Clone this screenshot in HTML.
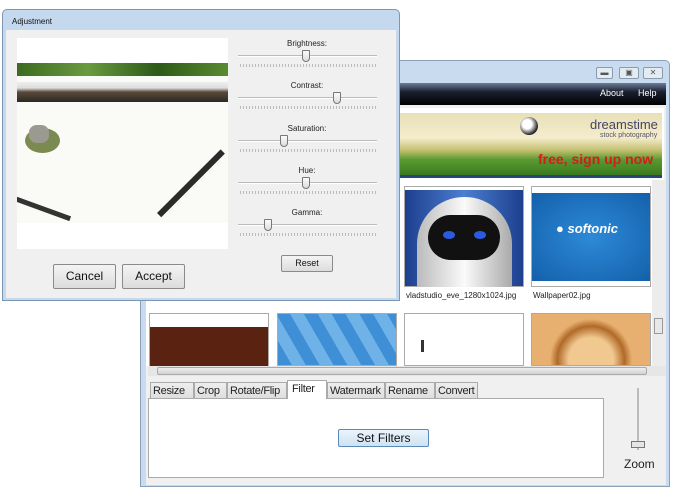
<!DOCTYPE html>
<html><head><style>
*{margin:0;padding:0;box-sizing:border-box}
body{width:680px;height:501px;background:#fff;position:relative;overflow:hidden;font-family:"Liberation Sans",sans-serif}
.a{position:absolute}
.btn{position:absolute;border:1px solid #8a8a8a;border-radius:2px;background:linear-gradient(#f4f4f4,#dcdcdc);text-align:center;color:#111}
.tab{position:absolute;top:382px;height:17px;border:1px solid #aaa;border-bottom:none;background:linear-gradient(#eee,#ddd);font-size:11px;letter-spacing:-0.3px;padding-left:2px;line-height:16px;color:#222;white-space:nowrap;overflow:hidden}
.lbl{position:absolute;font-size:8px;color:#222;width:140px;text-align:center}
.line{position:absolute;height:2px;background:#bbb;border-bottom:1px solid #fff}
.ticks{position:absolute;height:3px;background:repeating-linear-gradient(90deg,#bbb 0 1px,transparent 1px 3px)}
.thumb{position:absolute;width:8px;height:12px;border:1px solid #777;background:linear-gradient(#fafafa,#ddd);border-radius:1px 1px 4px 4px}
</style></head><body>
<div class="a" style="left:140px;top:60px;width:530px;height:427px;background:#c9dcef;border:1px solid #8aa0b8;border-radius:5px 5px 0 0"></div>
<div class="a" style="left:596px;top:67px;width:17px;height:12px;border:1px solid #8a9bb0;background:#e3ebf3;border-radius:2px;font-size:8px;text-align:center;color:#555">▬</div>
<div class="a" style="left:619px;top:67px;width:20px;height:12px;border:1px solid #8a9bb0;background:#e3ebf3;border-radius:2px;font-size:8px;text-align:center;color:#555">▣</div>
<div class="a" style="left:643px;top:67px;width:20px;height:12px;border:1px solid #8a9bb0;background:#e3ebf3;border-radius:2px;font-size:8px;text-align:center;color:#555">✕</div>
<div class="a" style="left:146px;top:83px;width:520px;height:22px;background:linear-gradient(#6d7d98,#1a2030 40%,#000)"></div>
<div class="a" style="left:600px;top:88px;font-size:9px;color:#fff">About</div>
<div class="a" style="left:638px;top:88px;font-size:9px;color:#fff">Help</div>
<div class="a" style="left:146px;top:105px;width:520px;height:380px;background:#f0f0f0"></div>
<div class="a" style="left:146px;top:108px;width:518px;height:72px;background:#fff"></div>
<div class="a" style="left:399px;top:113px;width:263px;height:62px;background:linear-gradient(#e8e0b8,#f4eccc 40%,#c4c070 60%,#5a9a30 75%,#3a7a20)"></div>
<div class="a" style="left:520px;top:117px;width:18px;height:18px;border-radius:50%;background:radial-gradient(circle at 40% 40%,#fff 30%,#222 70%)"></div>
<div class="a" style="left:590px;top:117px;font-size:13px;color:#446">dreamstime</div>
<div class="a" style="left:600px;top:132px;font-size:7px;color:#556">stock photography</div>
<div class="a" style="left:538px;top:151px;font-size:14px;font-weight:bold;color:#d41c1c">free, sign up now</div>
<div class="a" style="left:399px;top:175px;width:263px;height:3px;background:#26457a"></div>
<div class="a" style="left:146px;top:180px;width:506px;height:186px;background:#fff"></div>
<div class="a" style="left:652px;top:180px;width:14px;height:186px;background:#ececec"></div>
<div class="a" style="left:654px;top:318px;width:9px;height:16px;border:1px solid #999;background:#e8e8e8"></div>
<div class="a" style="left:404px;top:186px;width:120px;height:101px;border:1px solid #aaa;background:#fff"></div>
<div class="a" style="left:405px;top:190px;width:118px;height:96px;background:linear-gradient(90deg,#1d3f8e,#4c7ed0,#1d3f8e)"></div>
<div class="a" style="left:417px;top:197px;width:95px;height:90px;border-radius:47px 47px 0 0;background:linear-gradient(90deg,#bbb,#fafafa,#aaa)"></div>
<div class="a" style="left:428px;top:215px;width:72px;height:45px;border-radius:36px;background:#111"></div>
<div class="a" style="left:443px;top:231px;width:12px;height:8px;border-radius:50%;background:#2a5ae0"></div>
<div class="a" style="left:474px;top:231px;width:12px;height:8px;border-radius:50%;background:#2a5ae0"></div>
<div class="a" style="left:531px;top:186px;width:120px;height:101px;border:1px solid #aaa;background:#fff"></div>
<div class="a" style="left:532px;top:193px;width:118px;height:88px;background:radial-gradient(#2d8ad8,#1460aa)"></div>
<div class="a" style="left:556px;top:221px;font-size:13px;font-weight:bold;font-style:italic;color:#fff">● softonic</div>
<div class="a" style="left:406px;top:291px;font-size:8px;color:#222">vladstudio_eve_1280x1024.jpg</div>
<div class="a" style="left:533px;top:291px;font-size:8px;color:#222">Wallpaper02.jpg</div>
<div class="a" style="left:149px;top:313px;width:120px;height:53px;border:1px solid #aaa;background:#fff"></div>
<div class="a" style="left:150px;top:327px;width:118px;height:39px;background:#5a2210"></div>
<div class="a" style="left:277px;top:313px;width:120px;height:53px;border:1px solid #aaa;background:repeating-linear-gradient(60deg,#3e8fd6 0 12px,#6fb2e8 12px 24px)"></div>
<div class="a" style="left:404px;top:313px;width:120px;height:53px;border:1px solid #aaa;background:#fff"></div>
<div class="a" style="left:421px;top:340px;width:3px;height:12px;background:#333"></div>
<div class="a" style="left:531px;top:313px;width:120px;height:53px;border:1px solid #aaa;background:radial-gradient(circle at 50% 90%,#f0c890 30%,#b06a28 45%,#e8b070 55%)"></div>
<div class="a" style="left:148px;top:366px;width:518px;height:10px;background:#e6e6e6"></div>
<div class="a" style="left:157px;top:367px;width:490px;height:8px;background:linear-gradient(#eee,#d2d2d2);border:1px solid #aaa;border-radius:2px"></div>
<div class="tab" style="left:150px;width:44px">Resize</div>
<div class="tab" style="left:194px;width:33px">Crop</div>
<div class="tab" style="left:227px;width:60px">Rotate/Flip</div>
<div class="tab" style="left:287px;width:40px;top:380px;height:19px;background:#fff;z-index:2;padding-left:4px">Filter</div>
<div class="tab" style="left:327px;width:58px">Watermark</div>
<div class="tab" style="left:385px;width:50px">Rename</div>
<div class="tab" style="left:435px;width:43px">Convert</div>
<div class="a" style="left:148px;top:398px;width:456px;height:80px;background:#fff;border:1px solid #aaa"></div>
<div class="btn" style="left:338px;top:429px;width:91px;height:18px;font-size:12px;line-height:16px;border-color:#5a8ab8;background:linear-gradient(#eaf4fc,#cfe2f2)">Set Filters</div>
<div class="a" style="left:637px;top:388px;width:2px;height:62px;background:#bbb"></div>
<div class="a" style="left:631px;top:441px;width:14px;height:7px;border:1px solid #777;background:#e4e4e4"></div>
<div class="a" style="left:624px;top:457px;font-size:12px;color:#222">Zoom</div>

<div class="a" style="left:2px;top:9px;width:398px;height:292px;background:#c4d8ee;border:1px solid #7c97b4;border-radius:5px 5px 0 0"></div>
<div class="a" style="left:12px;top:17px;font-size:8px;color:#111">Adjustment</div>
<div class="a" style="left:6px;top:30px;width:390px;height:268px;background:#f0f0f0"></div>
<div class="a" style="left:17px;top:38px;width:211px;height:211px;background:#fff"></div>
<div class="a" style="left:17px;top:63px;width:211px;height:160px;background:#fafaf6;overflow:hidden">
 <div class="a" style="left:0;top:0;width:211px;height:13px;background:linear-gradient(90deg,#3c6a20,#6a9a40,#2c5a18,#5a8a30)"></div>
 <div class="a" style="left:0;top:19px;width:211px;height:20px;background:linear-gradient(#eee,#ddd 30%,#5a4a3a 50%,#2a2a20)"></div>
 <div class="a" style="left:8px;top:65px;width:35px;height:25px;background:#7a8a50;border-radius:50%"></div>
 <div class="a" style="left:12px;top:62px;width:20px;height:18px;background:#9a9a90;border-radius:40%"></div>
 <div class="a" style="left:140px;top:150px;width:90px;height:6px;background:#2a2a2a;transform:rotate(-45deg);transform-origin:0 0"></div>
 <div class="a" style="left:-5px;top:143px;width:60px;height:5px;background:#333;transform:rotate(20deg)"></div>
</div>
<div class="lbl" style="left:237px;top:39px">Brightness:</div>
<div class="lbl" style="left:237px;top:81px">Contrast:</div>
<div class="lbl" style="left:237px;top:124px">Saturation:</div>
<div class="lbl" style="left:237px;top:166px">Hue:</div>
<div class="lbl" style="left:237px;top:208px">Gamma:</div>
<div class="line" style="left:238px;top:55px;width:139px"></div><div class="ticks" style="left:240px;top:64px;width:136px"></div><div class="thumb" style="left:302px;top:50px"></div>
<div class="line" style="left:238px;top:97px;width:139px"></div><div class="ticks" style="left:240px;top:106px;width:136px"></div><div class="thumb" style="left:333px;top:92px"></div>
<div class="line" style="left:238px;top:140px;width:139px"></div><div class="ticks" style="left:240px;top:149px;width:136px"></div><div class="thumb" style="left:280px;top:135px"></div>
<div class="line" style="left:238px;top:182px;width:139px"></div><div class="ticks" style="left:240px;top:191px;width:136px"></div><div class="thumb" style="left:302px;top:177px"></div>
<div class="line" style="left:238px;top:224px;width:139px"></div><div class="ticks" style="left:240px;top:233px;width:136px"></div><div class="thumb" style="left:264px;top:219px"></div>
<div class="btn" style="left:281px;top:255px;width:52px;height:17px;font-size:9px;line-height:15px">Reset</div>
<div class="btn" style="left:53px;top:264px;width:63px;height:25px;font-size:12px;line-height:23px">Cancel</div>
<div class="btn" style="left:122px;top:264px;width:63px;height:25px;font-size:12px;line-height:23px">Accept</div>
</body></html>
